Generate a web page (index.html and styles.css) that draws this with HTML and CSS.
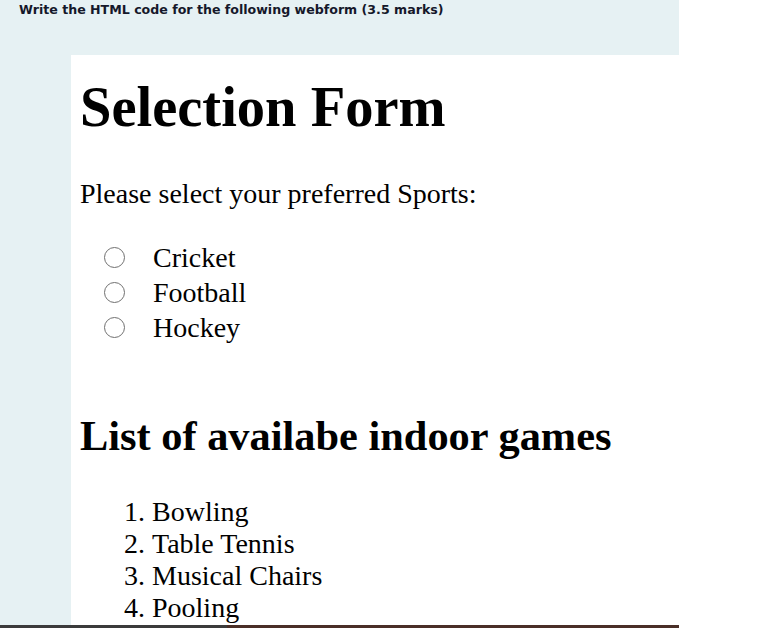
FILE: index.html
```html
<!DOCTYPE html>
<html>
<head>
<meta charset="utf-8">
<link rel="stylesheet" href="styles.css">
</head>
<body>
<div class="frame">
  <div class="question">Write the HTML code for the following webform (3.5 marks)</div>
  <div class="page">
    <h1 class="title">Selection Form</h1>
    <p class="prompt">Please select your preferred Sports:</p>
    <div class="options">
      <label class="option"><span class="radio"></span><span>Cricket</span></label>
      <label class="option"><span class="radio"></span><span>Football</span></label>
      <label class="option"><span class="radio"></span><span>Hockey</span></label>
    </div>
    <h2 class="subtitle">List of availabe indoor games</h2>
    <ol class="games">
      <li>Bowling</li>
      <li>Table Tennis</li>
      <li>Musical Chairs</li>
      <li>Pooling</li>
    </ol>
  </div>
  <div class="bottom-bar"></div>
</div>
</body>
</html>
```

FILE: styles.css
```css
html, body {
  margin: 0;
  padding: 0;
  background: #ffffff;
}
.frame {
  width: 679px;
  height: 628px;
  background: #e6f1f3;
  display: flex;
  flex-direction: column;
  overflow: hidden;
}
.question {
  height: 55px;
  flex: none;
  box-sizing: border-box;
  padding: 2px 0 0 19px;
  font-family: "DejaVu Sans", Verdana, sans-serif;
  font-weight: bold;
  font-size: 12.6px;
  color: #15182a;
  line-height: 15px;
}
.page {
  flex: 1;
  margin-left: 71px;
  background: #ffffff;
  padding: 21px 0 0 9px;
  font-family: "Liberation Serif", "Times New Roman", serif;
  color: #000;
  overflow: hidden;
}
.title {
  margin: 0;
  font-size: 56.5px;
  font-weight: bold;
  line-height: 62px;
}
.prompt {
  margin: 40px 0 0 0;
  font-size: 28px;
  line-height: 31px;
}
.options {
  margin-top: 31px;
  display: flex;
  flex-direction: column;
  padding-left: 24px;
}
.option {
  display: flex;
  align-items: center;
  height: 35px;
  font-size: 28px;
  gap: 28px;
}
.radio {
  width: 19px;
  height: 19px;
  border: 1px solid #707070;
  border-radius: 50%;
  background: #fff;
  flex: none;
}
.subtitle {
  margin: 67px 0 0 0;
  font-size: 42.4px;
  font-weight: bold;
  line-height: 48px;
}
.games {
  margin: 36px 0 0 0;
  padding-left: 72px;
  font-size: 28px;
  line-height: 32px;
}
.bottom-bar {
  height: 3px;
  flex: none;
  background: linear-gradient(to right, #3b3b3b 0, #3b3b3b 227px, #4a2f28 227px, #4a2f28 100%);
}
```
